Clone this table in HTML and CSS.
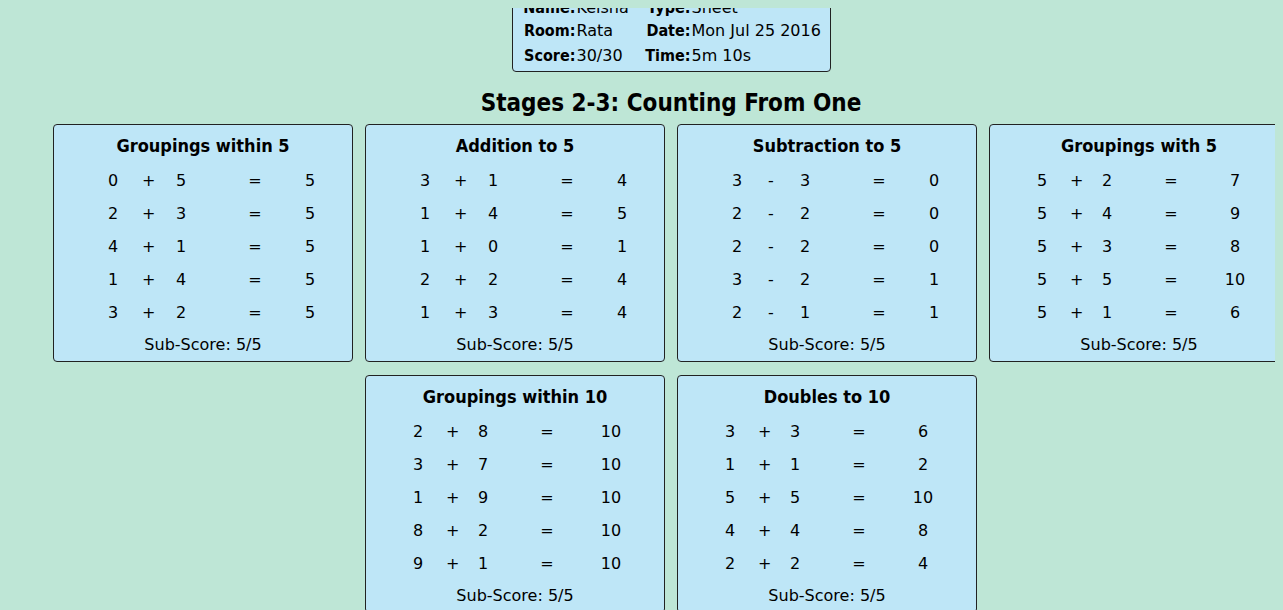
FILE: index.html
```html
<!DOCTYPE html>
<html lang="en">
<head>
<meta charset="utf-8">
<title>Stages 2-3: Counting From One</title>
<link rel="stylesheet" href="styles.css">
</head>
<body>
<div class="page">
  <div class="info">
    <div class="info-grid">
      <span class="lbl">Name:</span><span class="val">Keisha</span><span class="lbl">Type:</span><span class="val">Sheet</span>
      <span class="lbl">Room:</span><span class="val">Rata</span><span class="lbl">Date:</span><span class="val">Mon Jul 25 2016</span>
      <span class="lbl">Score:</span><span class="val">30/30</span><span class="lbl">Time:</span><span class="val">5m 10s</span>
    </div>
  </div>
  <h1 class="stage">Stages 2-3: Counting From One</h1>
  <div class="cards">
    <div class="card">
      <h2 class="card-title">Groupings within 5</h2>
      <div class="sums narrow">
        <span>0</span><span>+</span><span>5</span><span>=</span><span>5</span>
        <span>2</span><span>+</span><span>3</span><span>=</span><span>5</span>
        <span>4</span><span>+</span><span>1</span><span>=</span><span>5</span>
        <span>1</span><span>+</span><span>4</span><span>=</span><span>5</span>
        <span>3</span><span>+</span><span>2</span><span>=</span><span>5</span>
      </div>
      <div class="sub">Sub-Score: 5/5</div>
    </div>
    <div class="card">
      <h2 class="card-title">Addition to 5</h2>
      <div class="sums narrow">
        <span>3</span><span>+</span><span>1</span><span>=</span><span>4</span>
        <span>1</span><span>+</span><span>4</span><span>=</span><span>5</span>
        <span>1</span><span>+</span><span>0</span><span>=</span><span>1</span>
        <span>2</span><span>+</span><span>2</span><span>=</span><span>4</span>
        <span>1</span><span>+</span><span>3</span><span>=</span><span>4</span>
      </div>
      <div class="sub">Sub-Score: 5/5</div>
    </div>
    <div class="card">
      <h2 class="card-title">Subtraction to 5</h2>
      <div class="sums narrow">
        <span>3</span><span>-</span><span>3</span><span>=</span><span>0</span>
        <span>2</span><span>-</span><span>2</span><span>=</span><span>0</span>
        <span>2</span><span>-</span><span>2</span><span>=</span><span>0</span>
        <span>3</span><span>-</span><span>2</span><span>=</span><span>1</span>
        <span>2</span><span>-</span><span>1</span><span>=</span><span>1</span>
      </div>
      <div class="sub">Sub-Score: 5/5</div>
    </div>
    <div class="card">
      <h2 class="card-title">Groupings with 5</h2>
      <div class="sums wide">
        <span>5</span><span>+</span><span>2</span><span>=</span><span>7</span>
        <span>5</span><span>+</span><span>4</span><span>=</span><span>9</span>
        <span>5</span><span>+</span><span>3</span><span>=</span><span>8</span>
        <span>5</span><span>+</span><span>5</span><span>=</span><span>10</span>
        <span>5</span><span>+</span><span>1</span><span>=</span><span>6</span>
      </div>
      <div class="sub">Sub-Score: 5/5</div>
    </div>
    <div class="card">
      <h2 class="card-title">Groupings within 10</h2>
      <div class="sums wide">
        <span>2</span><span>+</span><span>8</span><span>=</span><span>10</span>
        <span>3</span><span>+</span><span>7</span><span>=</span><span>10</span>
        <span>1</span><span>+</span><span>9</span><span>=</span><span>10</span>
        <span>8</span><span>+</span><span>2</span><span>=</span><span>10</span>
        <span>9</span><span>+</span><span>1</span><span>=</span><span>10</span>
      </div>
      <div class="sub">Sub-Score: 5/5</div>
    </div>
    <div class="card">
      <h2 class="card-title">Doubles to 10</h2>
      <div class="sums wide">
        <span>3</span><span>+</span><span>3</span><span>=</span><span>6</span>
        <span>1</span><span>+</span><span>1</span><span>=</span><span>2</span>
        <span>5</span><span>+</span><span>5</span><span>=</span><span>10</span>
        <span>4</span><span>+</span><span>4</span><span>=</span><span>8</span>
        <span>2</span><span>+</span><span>2</span><span>=</span><span>4</span>
      </div>
      <div class="sub">Sub-Score: 5/5</div>
    </div>
  </div>
</div>
</body>
</html>
```
FILE: styles.css
```css
html {
  scrollbar-width: none;
}
html::-webkit-scrollbar {
  display: none;
}
body {
  margin: 8px;
  background: #bee6d6;
  color: #000;
  font-family: "Comic Sans MS", "DejaVu Sans", sans-serif;
  font-size: 16px;
}
.page {
  width: 1326px;
}
.info {
  width: fit-content;
  margin: -14px auto 0;
  padding: 1px 8px 3px 7px;
  background: #bee6f7;
  border: 1px solid #222;
  border-radius: 4px;
}
.info-grid {
  display: grid;
  grid-template-columns: 56px 68px 47px 131px;
  grid-template-rows: 22px 25px 25px;
  align-items: center;
}
.lbl {
  font-weight: bold;
  text-align: right;
  font-family: "DejaVu Sans Condensed", "DejaVu Sans", sans-serif;
}
.val {
  padding-left: 1px;
  white-space: nowrap;
}
.stage {
  margin: 17px 0 7px;
  font-size: 24px;
  line-height: 28px;
  text-align: center;
  font-weight: bold;
  font-family: "DejaVu Sans Condensed", "DejaVu Sans", sans-serif;
}
.cards {
  display: flex;
  flex-wrap: wrap;
  justify-content: center;
  gap: 13px 12px;
}
.card {
  box-sizing: border-box;
  width: 300px;
  height: 238px;
  padding: 8px 0 3px;
  background: #bee6f7;
  border: 1px solid #222;
  border-radius: 4px;
}
.card-title {
  margin: 0 0 5px;
  font-size: 18px;
  line-height: 26px;
  text-align: center;
  font-weight: bold;
  font-family: "DejaVu Sans Condensed", "DejaVu Sans", sans-serif;
}
.sums {
  display: grid;
  grid-auto-rows: 33px;
  align-items: center;
  text-align: center;
  white-space: nowrap;
}
.sums.narrow {
  grid-template-columns: 58px 10px 58px 90px 20px;
  margin-left: 30px;
}
.sums.wide {
  grid-template-columns: 56px 10px 54px 74px 54px;
  margin-left: 24px;
}
.sub {
  margin-top: 3px;
  line-height: 26px;
  text-align: center;
}
```
